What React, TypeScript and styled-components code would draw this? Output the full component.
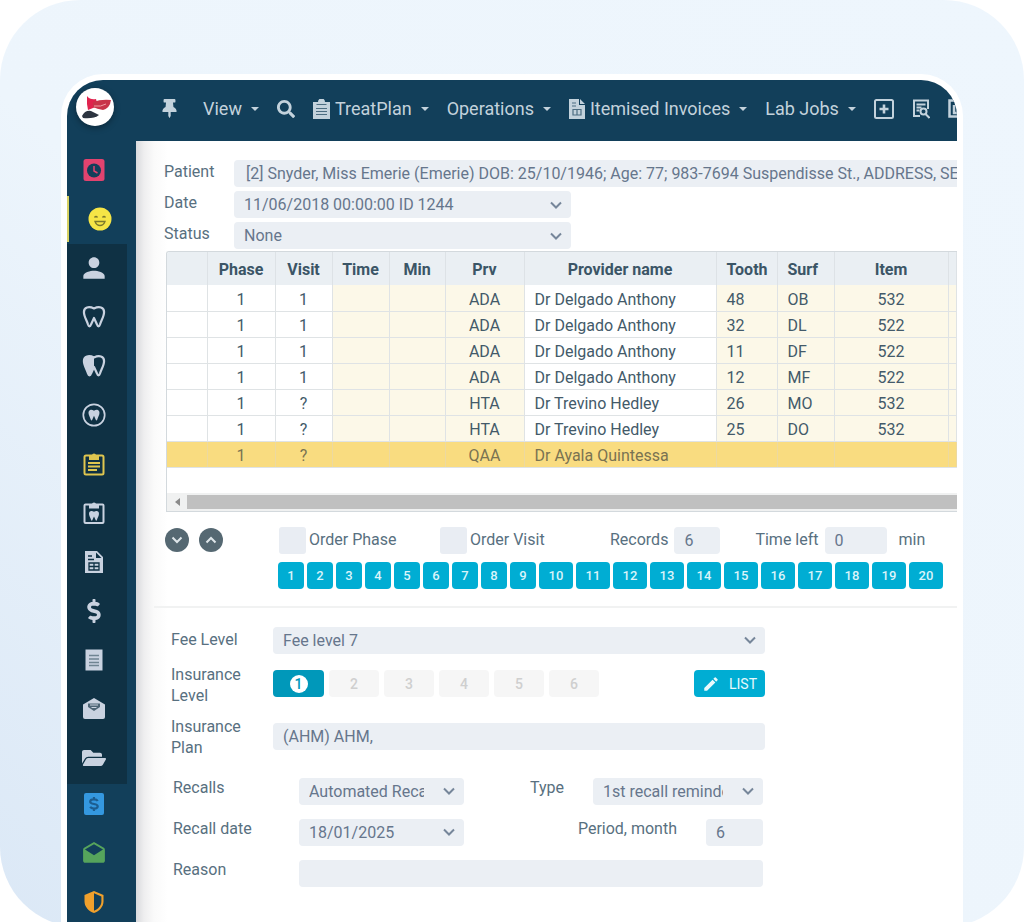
import React from "react";
import styled, { createGlobalStyle, css } from "styled-components";
import { FaThumbtack, FaSearch, FaDollarSign, FaFolderOpen } from "react-icons/fa";
import { MdPerson, MdDrafts, MdEdit } from "react-icons/md";

const GlobalStyle = createGlobalStyle`
  * { box-sizing: border-box; }
  body { margin: 0; background: #ffffff; }
  body, button, input, select, table {
    font-family: Roboto, "Liberation Sans", sans-serif;
    font-size: 16px;
  }
`;

const Backdrop = styled.div`
  display: flex;
  min-height: 100vh;
  padding: 74px 61px 0;
  border-radius: 80px;
  overflow: hidden;
  background: linear-gradient(to top right, #dbe8f6 0%, #edf5fc 45%, #eef6fd 100%);
`;

const Frame = styled.div`
  flex: 1;
  min-width: 0;
  display: flex;
  padding: 6px 6px 0;
  border-radius: 42px 42px 0 0;
  background: #ffffff;
`;

const AppShell = styled.div`
  flex: 1;
  min-width: 0;
  display: flex;
  overflow: hidden;
  border-radius: 36px 36px 0 0;
  background: #123f5a;
`;

const Sidebar = styled.nav`
  flex: none;
  width: 69px;
  display: flex;
  flex-direction: column;
`;

const LogoLink = styled.a`
  display: flex;
  width: 38px;
  height: 38px;
  margin: 8px 0 32px 9px;
  border-radius: 50%;
  background: #ffffff;
  box-shadow: 0 2px 6px rgba(0, 0, 0, 0.35);
`;

const NavGroup = styled.div<{ $dark?: boolean }>`
  display: flex;
  flex-direction: column;
  gap: 25px;
  width: 60px;
  padding-bottom: 13px;
  ${(p) =>
    p.$dark &&
    css`
      padding: 12px 0 14px;
      margin-bottom: 8px;
      background: #0f3144;
    `}
`;

const NavLink = styled.a<{ $color?: string; $current?: boolean }>`
  display: flex;
  align-items: center;
  justify-content: center;
  height: 24px;
  margin-right: 6px;
  color: ${(p) => p.$color ?? "#c9d2e0"};
  svg { display: block; width: 24px; height: 24px; }
  ${(p) =>
    p.$current &&
    css`
      height: 46px;
      margin: -11px 0 -11px;
      padding-left: 4px;
      border-left: 2px solid #d8d264;
    `}
`;

const Workspace = styled.div`
  flex: 1;
  min-width: 0;
  display: flex;
  flex-direction: column;
`;

const TopBar = styled.div`
  display: flex;
  align-items: center;
  gap: 18px;
  height: 61px;
  padding: 0 0 4px 24px;
  overflow: hidden;
`;

const MenuButton = styled.button`
  flex: none;
  display: flex;
  align-items: center;
  gap: 5px;
  padding: 0;
  border: 0;
  background: none;
  color: #c3d2dc;
  font-size: 18px;
  line-height: 24px;
  white-space: nowrap;
  svg { display: block; }
`;

const PinButton = styled(MenuButton)`
  margin-right: 6px;
`;

const Caret = styled.span`
  margin-left: 4px;
  border: 4px solid transparent;
  border-top-color: currentColor;
  border-bottom-width: 0;
`;

const Page = styled.main`
  flex: 1;
  padding: 19px 0 35px;
  background: linear-gradient(to right, #d9dadd 0, #eeeeef 8px, #fafafa 18px, #ffffff 32px);
`;

const HeaderForm = styled.form`
  display: grid;
  grid-template-columns: 70px minmax(0, 1fr);
  gap: 4px 0;
  padding-left: 28px;
  margin-bottom: 2px;
`;

const Label = styled.label`
  color: #587080;
  line-height: 20px;
  white-space: nowrap;
`;

const TopLabel = styled(Label)`
  line-height: 23px;
`;

const fieldLook = css`
  width: 100%;
  height: 27px;
  margin: 0;
  padding: 0 10px;
  border: 0;
  border-radius: 4px;
  background: #ebeff4;
  color: #66768c;
`;

const TextInput = styled.input<{ $width?: number }>`
  ${fieldLook}
  ${(p) => p.$width && css`width: ${p.$width}px;`}
`;

const PatientInput = styled(TextInput)`
  padding: 0 0 0 12px;
  border-radius: 4px 0 0 4px;
`;

const SelectBox = styled.div<{ $width?: number }>`
  display: grid;
  align-items: center;
  width: ${(p) => (p.$width ? `${p.$width}px` : "100%")};
  select, svg { grid-area: 1 / 1; }
  select {
    ${fieldLook}
    appearance: none;
    padding-right: 40px;
  }
  svg {
    justify-self: end;
    margin-right: 8px;
    pointer-events: none;
  }
`;

const GridPanel = styled.section`
  margin-left: 30px;
  border: 1px solid #d3d9dd;
  border-right: 0;
  border-radius: 3px 0 0 0;
  overflow: hidden;
  background: #ffffff;
`;

const Table = styled.table`
  width: 100%;
  table-layout: fixed;
  border-collapse: collapse;
  color: #435a69;
`;

const HeadCell = styled.th<{ $width?: number; $left?: boolean }>`
  width: ${(p) => (p.$width ? `${p.$width}px` : "auto")};
  height: 33px;
  padding: 2px 0 0 ${(p) => (p.$left ? 10 : 0)}px;
  border-right: 1px solid #dde2e6;
  background: #eaeff3;
  color: #3b5566;
  font-weight: 700;
  text-align: ${(p) => (p.$left ? "left" : "center")};
`;

const Cell = styled.td<{ $left?: boolean; $tint?: boolean }>`
  height: 26px;
  padding: 4px 0 0 ${(p) => (p.$left ? 10 : 0)}px;
  border-right: 1px solid #dfe3e5;
  border-bottom: 1px solid #dfe3e5;
  background: ${(p) => (p.$tint ? "#fcf8e8" : "#ffffff")};
  line-height: 20px;
  text-align: ${(p) => (p.$left ? "left" : "center")};
  white-space: nowrap;
`;

const Row = styled.tr<{ $selected?: boolean }>`
  ${(p) =>
    p.$selected &&
    css`
      color: #7a7352;
      ${Cell} {
        background: #f9dc80;
        border-right-color: #ecd9a0;
      }
    `}
`;

const ScrollTrack = styled.div`
  display: flex;
  align-items: center;
  height: 18px;
  margin-top: 25px;
  background: #f0f1f1;
`;

const ScrollArrow = styled.button`
  display: flex;
  align-items: center;
  justify-content: center;
  width: 20px;
  height: 18px;
  padding: 0;
  border: 0;
  background: none;
`;

const ScrollThumb = styled.div`
  flex: 1;
  height: 14px;
  background: #c0c0c0;
`;

const ControlsRow = styled.div`
  display: flex;
  align-items: center;
  height: 27px;
  margin: 15px 0 8px 29px;
`;

const RoundButton = styled.button`
  display: flex;
  align-items: center;
  justify-content: center;
  width: 24px;
  height: 24px;
  margin-right: 10px;
  padding: 0;
  border: 0;
  border-radius: 50%;
  background: #556872;
`;

const CheckLabel = styled(Label)`
  display: flex;
  align-items: center;
  gap: 3px;
  width: 161px;
  input {
    appearance: none;
    width: 27px;
    height: 27px;
    margin: 0;
    border-radius: 3px;
    background: #e9edf3;
  }
`;

const CheckGroup = styled.div`
  display: flex;
  margin-left: 46px;
  width: 331px;
`;

const FieldLabel = styled(Label)<{ $gap: number }>`
  display: flex;
  align-items: center;
  gap: 6px;
  margin-right: ${(p) => p.$gap}px;
`;

const NumberRow = styled.div`
  display: flex;
  gap: 3px;
  padding-left: 142px;
`;

const NumberButton = styled.button<{ $wide?: boolean }>`
  flex: none;
  width: ${(p) => (p.$wide ? 34 : 26)}px;
  height: 27px;
  padding: 0;
  border: 0;
  border-radius: 4px;
  background: #00add3;
  color: #d9f4fa;
  font-size: 13px;
  font-weight: 500;
`;

const Divider = styled.hr`
  height: 2px;
  margin: 17px 0 19px 18px;
  border: 0;
  background: #f1f2f2;
`;

const FeeForm = styled.form`
  display: grid;
  grid-template-columns: 102px minmax(0, 1fr);
  row-gap: 10px;
  align-items: center;
  max-width: 629px;
  padding-left: 35px;
`;

const WrapLabel = styled(Label)`
  width: 80px;
  line-height: 21px;
  white-space: normal;
`;

const LevelRow = styled.div`
  display: flex;
  gap: 5px;
  padding-bottom: 2px;
`;

const LevelButton = styled.button<{ $active?: boolean }>`
  display: flex;
  align-items: center;
  justify-content: center;
  width: ${(p) => (p.$active ? 51 : 50)}px;
  height: 27px;
  padding: 0;
  border: 0;
  border-radius: 4px;
  background: ${(p) => (p.$active ? "#0098ba" : "#f6f6f6")};
  color: #cfcfcf;
  font-size: 14px;
  font-weight: 500;
`;

const LevelBadge = styled.span`
  width: 18px;
  height: 18px;
  border-radius: 50%;
  background: #ffffff;
  color: #0098ba;
  line-height: 18px;
`;

const ListButton = styled.button`
  display: flex;
  align-items: center;
  justify-content: center;
  gap: 9px;
  width: 71px;
  height: 27px;
  margin-left: auto;
  padding: 0;
  border: 0;
  border-radius: 4px;
  background: #00add3;
  color: #e8f9fc;
  font-size: 14px;
`;

const RecallForm = styled.form`
  display: flex;
  flex-direction: column;
  gap: 14px;
  max-width: 627px;
  margin-top: 20px;
  padding-left: 37px;
`;

const RecallRow = styled.div`
  display: flex;
  align-items: flex-start;
  > ${Label}:first-child { flex: none; width: 126px; }
`;

const RightPair = styled.div`
  display: flex;
  align-items: flex-start;
  gap: 29px;
  margin-left: auto;
`;

function Chevron() {
  return (
    <svg width="14" height="10" viewBox="0 0 14 10" fill="none" stroke="#76869a" strokeWidth="2">
      <path d="M2 2.5l5 5 5-5" />
    </svg>
  );
}

const TOOTH =
  "M12 3.5C9 2 7 1.800 5 2.500C2 3.500 1.500 7 2.500 10.500C3.500 14 5 16 6 19.500C6.800 22 8.200 22 9 19.500L12 13L15 19.500C15.800 22 17.200 22 18 19.500C19 16 20.500 14 21.500 10.500C22.500 7 22 3.500 19 2.500C17 1.800 15 2 12 3.500Z";
const TOOTH_LEFT =
  "M12 3.5C9 2 7 1.800 5 2.500C2 3.500 1.500 7 2.500 10.500C3.500 14 5 16 6 19.500C6.800 22 8.200 22 9 19.500L12 13Z";

function Svg({ children }: { children: React.ReactNode }) {
  return (
    <svg viewBox="0 0 24 24" fill="currentColor" fillRule="evenodd" aria-hidden="true">
      {children}
    </svg>
  );
}

const Icons = {
  clock: (
    <Svg>
      <rect x="1.500" y="1" width="21" height="22" rx="2.500" />
      <circle cx="12" cy="12.500" r="7" fill="#123f5a" />
      <path d="M12 8v5l3.500 2" fill="none" stroke="currentColor" strokeWidth="1.500" />
    </Svg>
  ),
  smile: (
    <Svg>
      <circle cx="12" cy="12" r="11.500" />
      <path d="M6.500 10.500q1.500-2 3 0M14.500 10.500q1.500-2 3 0" fill="none" stroke="#7d7a2c" strokeWidth="1.300" />
      <path d="M7 14.500h10q-1.500 4-5 4t-5-4z" fill="none" stroke="#7d7a2c" strokeWidth="1.300" />
    </Svg>
  ),
  tooth: (
    <Svg>
      <path d={TOOTH} fill="none" stroke="currentColor" strokeWidth="2.200" strokeLinejoin="round" />
    </Svg>
  ),
  toothHalf: (
    <Svg>
      <path d={TOOTH_LEFT} />
      <path d={TOOTH} fill="none" stroke="currentColor" strokeWidth="2.200" strokeLinejoin="round" />
    </Svg>
  ),
  toothCircle: (
    <Svg>
      <circle cx="12" cy="12" r="10.700" fill="none" stroke="currentColor" strokeWidth="1.700" />
      <g transform="translate(5.400 5.700) scale(0.550)"><path d={TOOTH} /></g>
    </Svg>
  ),
  clipboard: (
    <Svg>
      <rect x="2.500" y="3.500" width="19" height="19" rx="1.500" fill="none" stroke="currentColor" strokeWidth="2" />
      <path d="M7 8V3.500h3a2 2 0 0 1 4 0h3V8z" />
      <path d="M6 11h12M6 14.500h12M6 18h9" stroke="currentColor" strokeWidth="2" />
    </Svg>
  ),
  clipboardTooth: (
    <Svg>
      <rect x="2.500" y="3.500" width="19" height="18.500" rx="1" fill="none" stroke="currentColor" strokeWidth="2" />
      <path d="M7 7.500V3.500h3a2 2 0 0 1 4 0h3v4z" />
      <g transform="translate(6 9) scale(0.500)"><path d={TOOTH} /></g>
    </Svg>
  ),
  file: (
    <Svg>
      <path d="M3 1h12l6 6v16H3zM14 2.500V8h5.500z" />
      <path d="M6 6h4M6 9.500h6M7 13h10v7H7zM7 16.500h10M12 13v7" fill="none" stroke="#0f3144" strokeWidth="1.300" />
    </Svg>
  ),
  receipt: (
    <Svg>
      <path d="M3.500 1.500h17v21h-17z" />
      <path d="M7 7.500h10M7 11h10M7 14.500h10M7 17.500h10" stroke="#6f8492" strokeWidth="1.500" />
    </Svg>
  ),
  mail: (
    <Svg>
      <path d="M12 1l11 6.500V20a2 2 0 0 1-2 2H3a2 2 0 0 1-2-2V7.500z" />
      <path d="M6 6.500h12v3.500L12 14 6 10z" fill="#4c6475" />
      <path d="M8 8h8M9.500 10.500h5" stroke="currentColor" strokeWidth="1" />
    </Svg>
  ),
  billing: (
    <Svg>
      <rect x="2" y="1" width="20" height="22" rx="2" />
      <g transform="translate(5 5) scale(0.580)" fill="none" stroke="#1c5d90" strokeWidth="3.800">
        <path d="M18.500 7c-1-2-3-3-6.500-3-4 0-6.500 1.500-6.500 4 0 5.500 13 2.500 13 8 0 2.500-2.500 4-6.500 4-3.500 0-5.500-1-6.500-3M12 0v4M12 20v4" />
      </g>
    </Svg>
  ),
  shield: (
    <Svg>
      <path d="M12 1l9.500 4v6.500c0 5-4 9.700-9.500 11.500-5.500-1.800-9.500-6.500-9.500-11.500V5zM12 3.300v17.500c4.200-1.600 7.400-5.300 7.400-9.300V6.500z" />
    </Svg>
  ),
};

function MenuClipboard() {
  return (
    <svg width="17" height="20" viewBox="0 0 17 20" fill="currentColor">
      <path d="M0 3h5a3.500 3.500 0 0 1 7 0h5v17H0z" />
      <path d="M3.500 5.500h10M3 9.500h11M3 12.500h11M3 15.500h11" stroke="#4c6d81" strokeWidth="1.200" />
    </svg>
  );
}

function MenuFile() {
  return (
    <svg width="16" height="20" viewBox="0 0 16 20" fill="currentColor">
      <path d="M0 0h10v6h6v14H0z M11 0l5 5h-5z" />
      <path d="M3 4h4M3 7h4M4 10.500h8v5.500H4zM8 10.500V16" fill="none" stroke="#4c6d81" strokeWidth="1.200" />
    </svg>
  );
}

function AddBox() {
  return (
    <svg width="20" height="20" viewBox="0 0 20 20" fill="none" stroke="currentColor" strokeWidth="2">
      <rect x="1" y="1" width="18" height="18" rx="1.500" />
      <path d="M10 5.500v9M5.500 10h9" strokeWidth="2.600" />
    </svg>
  );
}

function FindDoc() {
  return (
    <svg width="18" height="20" viewBox="0 0 18 20" fill="none" stroke="currentColor" strokeWidth="2">
      <path d="M8 17H2V1.500h14V10M4.500 5.500h9M4.500 8.500h5M4.500 11.500h3" />
      <circle cx="11.500" cy="12.500" r="3" />
      <path d="M13.500 15l4 4" />
    </svg>
  );
}

function DocEdge() {
  return (
    <svg width="18" height="20" viewBox="0 0 18 20" fill="none" stroke="currentColor" strokeWidth="2.500">
      <path d="M1.500 1.500h9l6 6v10h-15zM6 6v8h8" />
    </svg>
  );
}

function Logo() {
  return (
    <svg width="38" height="38" viewBox="0 0 38 38" aria-hidden="true">
      <path d="M11 8q3 4 9 3l2 7-10 4-1-6z" fill="#e0234e" />
      <path d="M17 14q8-3 18-2-1 8-8 10-6-1-10-3z" fill="#c8344a" />
      <path d="M18 18q7 1 12-2" fill="none" stroke="#f0a0a8" strokeWidth="1" />
      <path d="M6 28q3-6 9-5l8 4q-5 4-16 3z" fill="#2c3440" />
    </svg>
  );
}

const columns: { title: string; width?: number; left?: boolean; tint?: boolean }[] = [
  { title: "", width: 40 },
  { title: "Phase", width: 68 },
  { title: "Visit", width: 57 },
  { title: "Time", width: 57, tint: true },
  { title: "Min", width: 56, tint: true },
  { title: "Prv", width: 79, tint: true },
  { title: "Provider name", width: 192 },
  { title: "Tooth", width: 61, left: true, tint: true },
  { title: "Surf", width: 57, left: true, tint: true },
  { title: "Item", width: 114, tint: true },
  { title: "", tint: true },
];

const rows = [
  ["", "1", "1", "", "", "ADA", "Dr Delgado Anthony", "48", "OB", "532", ""],
  ["", "1", "1", "", "", "ADA", "Dr Delgado Anthony", "32", "DL", "522", ""],
  ["", "1", "1", "", "", "ADA", "Dr Delgado Anthony", "11", "DF", "522", ""],
  ["", "1", "1", "", "", "ADA", "Dr Delgado Anthony", "12", "MF", "522", ""],
  ["", "1", "?", "", "", "HTA", "Dr Trevino Hedley", "26", "MO", "532", ""],
  ["", "1", "?", "", "", "HTA", "Dr Trevino Hedley", "25", "DO", "532", ""],
  ["", "1", "?", "", "", "QAA", "Dr Ayala Quintessa", "", "", "", ""],
];

export default function App() {
  return (
    <>
      <GlobalStyle />
      <Backdrop>
        <Frame>
          <AppShell>
            <Sidebar aria-label="Modules">
              <LogoLink href="#home" aria-label="Home"><Logo /></LogoLink>
              <NavGroup>
                <NavLink href="#schedule" aria-label="Schedule" $color="#e2436f">{Icons.clock}</NavLink>
                <NavLink href="#patient" aria-label="Patient file" $color="#f5e546" $current>{Icons.smile}</NavLink>
              </NavGroup>
              <NavGroup $dark>
                <NavLink href="#person" aria-label="Person"><MdPerson viewBox="3 3 18 18" /></NavLink>
                <NavLink href="#chart" aria-label="Chart">{Icons.tooth}</NavLink>
                <NavLink href="#perio" aria-label="Perio">{Icons.toothHalf}</NavLink>
                <NavLink href="#exam" aria-label="Exam">{Icons.toothCircle}</NavLink>
                <NavLink href="#plan" aria-label="Plan" $color="#dfc64f">{Icons.clipboard}</NavLink>
                <NavLink href="#dental-plan" aria-label="Dental plan">{Icons.clipboardTooth}</NavLink>
                <NavLink href="#invoices" aria-label="Invoices">{Icons.file}</NavLink>
                <NavLink href="#payments" aria-label="Payments"><FaDollarSign /></NavLink>
                <NavLink href="#notes" aria-label="Notes">{Icons.receipt}</NavLink>
                <NavLink href="#letters" aria-label="Letters">{Icons.mail}</NavLink>
                <NavLink href="#files" aria-label="Files"><FaFolderOpen /></NavLink>
              </NavGroup>
              <NavGroup>
                <NavLink href="#billing" aria-label="Billing" $color="#3498e0">{Icons.billing}</NavLink>
                <NavLink href="#inbox" aria-label="Inbox" $color="#56a45c"><MdDrafts viewBox="1 1 22 20" /></NavLink>
                <NavLink href="#security" aria-label="Security" $color="#f0a02c">{Icons.shield}</NavLink>
              </NavGroup>
            </Sidebar>

            <Workspace>
              <TopBar>
                <PinButton aria-label="Pin"><FaThumbtack size={19} /></PinButton>
                <MenuButton>View <Caret /></MenuButton>
                <MenuButton aria-label="Search"><FaSearch size={18} /></MenuButton>
                <MenuButton><MenuClipboard />TreatPlan <Caret /></MenuButton>
                <MenuButton>Operations <Caret /></MenuButton>
                <MenuButton><MenuFile />Itemised Invoices <Caret /></MenuButton>
                <MenuButton>Lab Jobs <Caret /></MenuButton>
                <MenuButton aria-label="Add"><AddBox /></MenuButton>
                <MenuButton aria-label="Find document"><FindDoc /></MenuButton>
                <MenuButton aria-label="Documents"><DocEdge /></MenuButton>
              </TopBar>

              <Page>
                <HeaderForm>
                  <TopLabel htmlFor="patient">Patient</TopLabel>
                  <PatientInput
                    id="patient"
                    readOnly
                    value="[2] Snyder, Miss Emerie (Emerie) DOB: 25/10/1946; Age: 77; 983-7694 Suspendisse St., ADDRESS, SE"
                  />
                  <TopLabel htmlFor="date">Date</TopLabel>
                  <SelectBox $width={337}>
                    <select id="date"><option>11/06/2018 00:00:00 ID 1244</option></select>
                    <Chevron />
                  </SelectBox>
                  <TopLabel htmlFor="status">Status</TopLabel>
                  <SelectBox $width={337}>
                    <select id="status"><option>None</option></select>
                    <Chevron />
                  </SelectBox>
                </HeaderForm>

                <GridPanel>
                  <Table>
                    <thead>
                      <tr>
                        {columns.map((c, i) => (
                          <HeadCell key={i} $width={c.width} $left={c.left}>{c.title}</HeadCell>
                        ))}
                      </tr>
                    </thead>
                    <tbody>
                      {rows.map((r, i) => (
                        <Row key={i} $selected={i === rows.length - 1}>
                          {r.map((text, j) => (
                            <Cell key={j} $left={columns[j].left || j === 6} $tint={columns[j].tint}>{text}</Cell>
                          ))}
                        </Row>
                      ))}
                    </tbody>
                  </Table>
                  <ScrollTrack>
                    <ScrollArrow aria-label="Scroll left">
                      <svg width="5" height="8" viewBox="0 0 5 8"><path d="M5 0v8L0 4z" fill="#8a8a8a" /></svg>
                    </ScrollArrow>
                    <ScrollThumb />
                  </ScrollTrack>
                </GridPanel>

                <ControlsRow>
                  <RoundButton aria-label="Move down">
                    <svg width="12" height="8" viewBox="0 0 12 8" fill="none" stroke="#dfe6ea" strokeWidth="2"><path d="M1.500 1.500L6 6l4.500-4.500" /></svg>
                  </RoundButton>
                  <RoundButton aria-label="Move up">
                    <svg width="12" height="8" viewBox="0 0 12 8" fill="none" stroke="#dfe6ea" strokeWidth="2"><path d="M1.500 6.500L6 2l4.500 4.500" /></svg>
                  </RoundButton>
                  <CheckGroup>
                    <CheckLabel><input type="checkbox" />Order Phase</CheckLabel>
                    <CheckLabel><input type="checkbox" />Order Visit</CheckLabel>
                  </CheckGroup>
                  <FieldLabel $gap={35}>Records <TextInput $width={46} defaultValue="6" /></FieldLabel>
                  <FieldLabel $gap={12}>Time left <TextInput $width={62} defaultValue="0" /></FieldLabel>
                  <Label as="span">min</Label>
                </ControlsRow>

                <NumberRow>
                  {Array.from({ length: 20 }, (_, i) => (
                    <NumberButton key={i} $wide={i > 8}>{i + 1}</NumberButton>
                  ))}
                </NumberRow>

                <Divider />

                <FeeForm>
                  <Label htmlFor="fee">Fee Level</Label>
                  <SelectBox>
                    <select id="fee"><option>Fee level 7</option></select>
                    <Chevron />
                  </SelectBox>
                  <WrapLabel as="span">Insurance Level</WrapLabel>
                  <LevelRow>
                    <LevelButton type="button" $active><LevelBadge>1</LevelBadge></LevelButton>
                    {[2, 3, 4, 5, 6].map((n) => (
                      <LevelButton type="button" key={n}>{n}</LevelButton>
                    ))}
                    <ListButton type="button"><MdEdit size={18} />LIST</ListButton>
                  </LevelRow>
                  <WrapLabel htmlFor="plan">Insurance Plan</WrapLabel>
                  <TextInput id="plan" defaultValue="(AHM) AHM," />
                </FeeForm>

                <RecallForm>
                  <RecallRow>
                    <Label htmlFor="recalls">Recalls</Label>
                    <SelectBox $width={165}>
                      <select id="recalls"><option>Automated Recall</option></select>
                      <Chevron />
                    </SelectBox>
                    <RightPair>
                      <Label htmlFor="type">Type</Label>
                      <SelectBox $width={170}>
                        <select id="type"><option>1st recall reminder</option></select>
                        <Chevron />
                      </SelectBox>
                    </RightPair>
                  </RecallRow>
                  <RecallRow>
                    <Label htmlFor="recall-date">Recall date</Label>
                    <SelectBox $width={165}>
                      <select id="recall-date"><option>18/01/2025</option></select>
                      <Chevron />
                    </SelectBox>
                    <RightPair>
                      <Label htmlFor="period">Period, month</Label>
                      <TextInput id="period" $width={57} defaultValue="6" />
                    </RightPair>
                  </RecallRow>
                  <RecallRow>
                    <Label htmlFor="reason">Reason</Label>
                    <TextInput id="reason" />
                  </RecallRow>
                </RecallForm>
              </Page>
            </Workspace>
          </AppShell>
        </Frame>
      </Backdrop>
    </>
  );
}
